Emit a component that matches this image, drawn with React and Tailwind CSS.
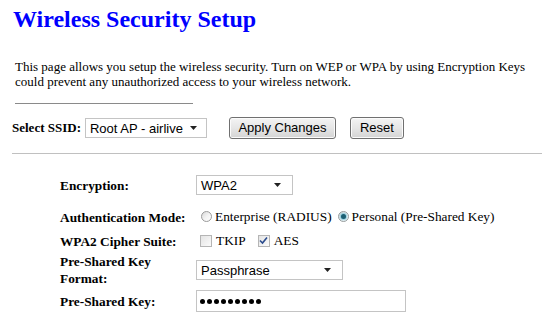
import React from "react";

const serif = { fontFamily: '"Liberation Serif", "Times New Roman", serif' };
const sans = { fontFamily: '"Liberation Sans", Arial, sans-serif' };

function Arrow() {
  return (
    <svg width="7" height="4" viewBox="0 0 7 4" className="shrink-0">
      <path d="M0 0 H7 L3.5 4 Z" fill="#222" />
    </svg>
  );
}

function Select({ value, width, arrowPad = "pr-[11px]" }) {
  return (
    <div
      className={`flex h-[20px] items-center justify-between border border-[#c4c4c4] bg-white pl-[4px] ${arrowPad} text-[13px] text-black`}
      style={{ ...sans, width }}
    >
      <span className="leading-none">{value}</span>
      <Arrow />
    </div>
  );
}

function Button({ children, width }) {
  return (
    <div
      className="flex h-[22px] items-center justify-center rounded-[3px] border border-[#707070] bg-gradient-to-b from-[#f4f4f4] via-[#e6e6e6] to-[#d4d4d4] text-[13px] text-black shadow-[inset_0_0_0_1px_#fbfbfb]"
      style={{ ...sans, width }}
    >
      {children}
    </div>
  );
}

function Radio({ checked }) {
  return (
    <span className="flex h-[11px] w-[11px] shrink-0 items-center justify-center rounded-full border border-[#9a9a9a] bg-gradient-to-br from-[#d8d8d8] via-[#f2f2f2] to-[#ffffff]">
      {checked && (
        <span className="h-[5px] w-[5px] rounded-full bg-[#1c5f73] shadow-[0_0_2px_1px_#7ac4d8]" />
      )}
    </span>
  );
}

function Checkbox({ checked }) {
  return (
    <span className="flex h-[12px] w-[12px] shrink-0 items-center justify-center border border-[#b5b5b5] bg-gradient-to-br from-[#e4e4e4] to-[#fbfbfb]">
      {checked && (
        <svg width="9" height="9" viewBox="0 0 9 9">
          <path d="M1 4.5 L3.5 7 L8 1.5" fill="none" stroke="#2a4b8d" strokeWidth="1.6" />
        </svg>
      )}
    </span>
  );
}

function Row({ label, height, className = "", children }) {
  return (
    <div className={`flex items-center ${className}`} style={{ height }}>
      <div className="w-[196px] shrink-0 pl-[60px] text-[13.33px] font-bold leading-[17px] text-black" style={serif}>
        {label}
      </div>
      <div className="flex items-center">{children}</div>
    </div>
  );
}

export default function App() {
  return (
    <div className="h-[323px] w-[542px] overflow-hidden bg-white text-black" style={serif}>
      <h2 className="ml-[13px] mt-[5px] h-[28px] text-[24px] font-bold leading-[28px] text-[#0000ff]">
        Wireless Security Setup
      </h2>

      <p className="ml-[15px] mt-[26px] w-[522px] text-[13px] leading-[15px]">
        This page allows you setup the wireless security. Turn on WEP or WPA by using Encryption Keys could
        prevent any unauthorized access to your wireless network.
      </p>

      <div className="ml-[15px] mt-[14px] h-px w-[178px] bg-[#8a8a8a]" />

      <div className="ml-[12px] mt-[14px] flex h-[20px] items-center">
        <span className="mr-[4px] text-[13px] font-bold">Select SSID:</span>
        <Select value="Root AP - airlive" width={122} arrowPad="pr-[9px]" />
        <div className="ml-[22px]">
          <Button width={107}>Apply Changes</Button>
        </div>
        <div className="ml-[14px]">
          <Button width={54}>Reset</Button>
        </div>
      </div>

      <div className="ml-[12px] mt-[15px] h-px bg-[#c0c0c0]" />

      <div className="mt-[19px]">
        <Row label="Encryption:" height={24}>
          <Select value="WPA2" width={97} />
        </Row>

        <Row label="Authentication Mode:" height={24} className="mt-[8px]">
          <div className="flex items-center text-[13.33px]">
            <span className="ml-[5px]">
              <Radio />
            </span>
            <span className="ml-[3px]">Enterprise (RADIUS)</span>
            <span className="ml-[6px]">
              <Radio checked />
            </span>
            <span className="ml-[3px]">Personal (Pre-Shared Key)</span>
          </div>
        </Row>

        <Row label="WPA2 Cipher Suite:" height={24}>
          <div className="flex items-center text-[13.33px]">
            <span className="ml-[4px]">
              <Checkbox />
            </span>
            <span className="ml-[4px]">TKIP</span>
            <span className="ml-[12px]">
              <Checkbox checked />
            </span>
            <span className="ml-[4px]">AES</span>
          </div>
        </Row>

        <Row
          label={
            <>
              Pre-Shared Key
              <br />
              Format:
            </>
          }
          height={34}
        >
          <Select value="Passphrase" width={147} />
        </Row>

        <Row label="Pre-Shared Key:" height={24} className="mt-[2px]">
          <div className="flex h-[22px] w-[210px] items-center border border-[#c4c4c4] bg-white pl-[3px]">
            <div className="flex gap-[2px]">
              {Array.from({ length: 9 }).map((_, i) => (
                <span key={i} className="h-[5px] w-[5px] rounded-full bg-black" />
              ))}
            </div>
          </div>
        </Row>
      </div>
    </div>
  );
}
